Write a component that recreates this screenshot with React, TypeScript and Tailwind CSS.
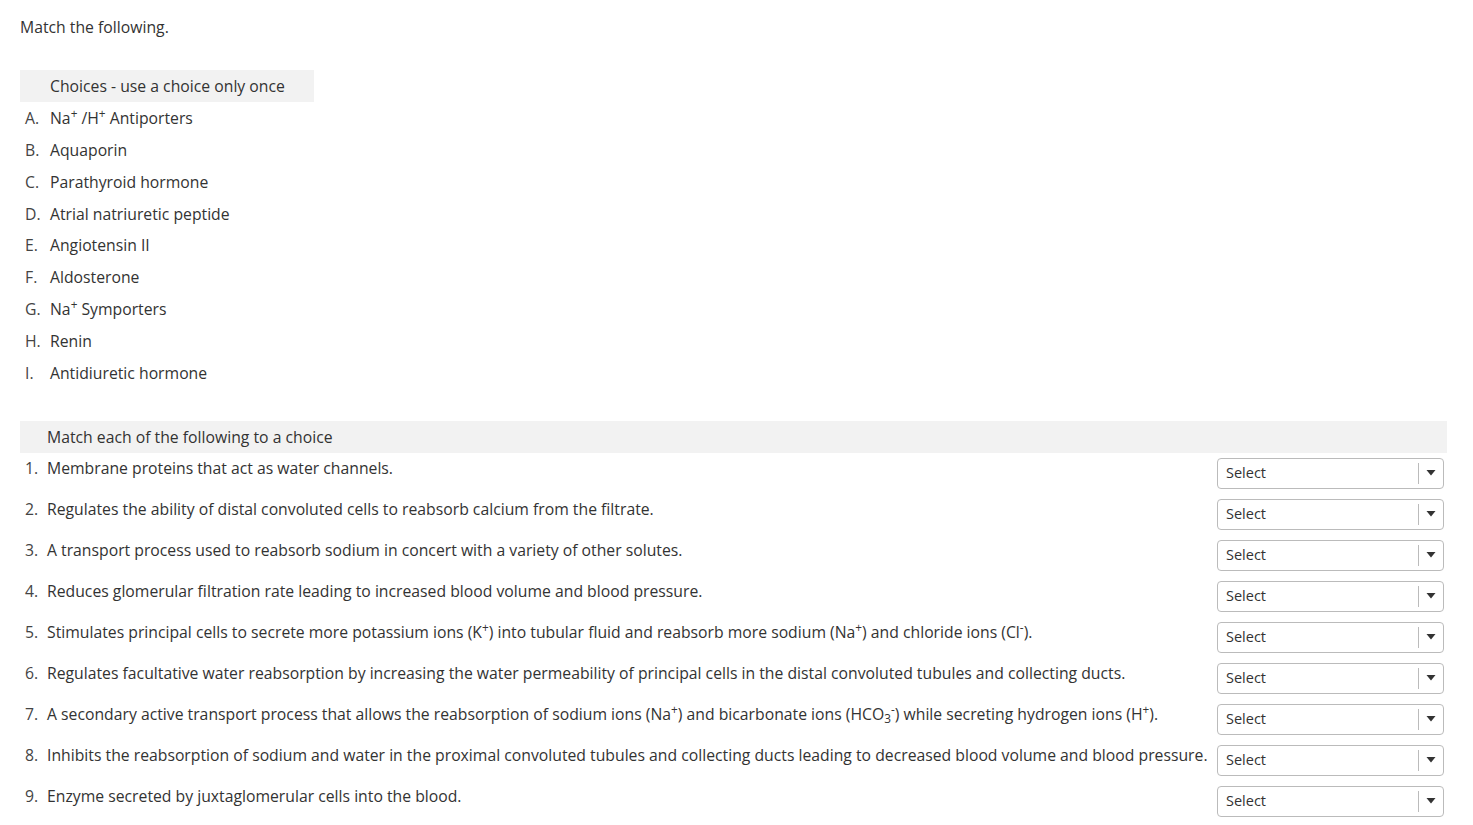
import React from "react";

const Sup = ({ c }: { c: string }) => <sup>{c}</sup>;

const choices: [string, React.ReactNode][] = [
  ["A.", <>Na<Sup c="+" /> /H<Sup c="+" /> Antiporters</>],
  ["B.", "Aquaporin"],
  ["C.", "Parathyroid hormone"],
  ["D.", "Atrial natriuretic peptide"],
  ["E.", "Angiotensin II"],
  ["F.", "Aldosterone"],
  ["G.", <>Na<Sup c="+" /> Symporters</>],
  ["H.", "Renin"],
  ["I.", "Antidiuretic hormone"],
];

const items: React.ReactNode[] = [
  "Membrane proteins that act as water channels.",
  "Regulates the ability of distal convoluted cells to reabsorb calcium from the filtrate.",
  "A transport process used to reabsorb sodium in concert with a variety of other solutes.",
  "Reduces glomerular filtration rate leading to increased blood volume and blood pressure.",
  <>
    Stimulates principal cells to secrete more potassium ions (K<Sup c="+" />) into tubular fluid and reabsorb more sodium (Na<Sup c="+" />) and chloride ions (Cl<Sup c="-" />).
  </>,
  "Regulates facultative water reabsorption by increasing the water permeability of principal cells in the distal convoluted tubules and collecting ducts.",
  <>
    A secondary active transport process that allows the reabsorption of sodium ions (Na<Sup c="+" />) and bicarbonate ions (HCO<sub>3</sub><Sup c="-" />) while secreting hydrogen ions (H<Sup c="+" />).
  </>,
  "Inhibits the reabsorption of sodium and water in the proximal convoluted tubules and collecting ducts leading to decreased blood volume and blood pressure.",
  "Enzyme secreted by juxtaglomerular cells into the blood.",
];

function SelectBox() {
  return (
    <div className="mt-[1px] h-[31px] w-[227px] shrink-0 rounded-[4px] border border-[#bbbbbb] bg-white flex items-center">
      <span className="flex-1 pl-[8px] text-[14.5px] text-[#333333]">Select</span>
      <div className="h-[21px] w-px bg-[#bbbbbb]" />
      <div className="w-[24px] flex items-center justify-center">
        <svg width="10" height="6" viewBox="0 0 10 6">
          <path d="M0.5 0 L9.5 0 L5 5.5 Z" fill="#333333" />
        </svg>
      </div>
    </div>
  );
}

export default function App() {
  return (
    <div
      className="bg-white text-[#333333] text-[15.75px] leading-[22px] pl-[20px] pr-[26px] pt-[16px] min-h-[825px]"
      style={{ fontFamily: '"Open Sans", "Noto Sans", sans-serif' }}
    >
      <div>Match the following.</div>

      <div className="mt-[32px] w-[294px]">
        <div className="h-[32px] bg-[#f2f2f2] flex items-center pl-[30px]">
          Choices - use a choice only once
        </div>
        {choices.map(([l, t]) => (
          <div key={l} className="h-[31.875px] flex items-center">
            <span className="w-[30px] pl-[5px] text-[#444444]">{l}</span>
            <span>{t}</span>
          </div>
        ))}
      </div>

      <div className="mt-[32px]">
        <div className="h-[32px] bg-[#f2f2f2] flex items-center pl-[27px]">
          Match each of the following to a choice
        </div>
        {items.map((t, i) => (
          <div key={i} className="h-[41px] flex items-start pt-[4px] pr-[3px]">
            <span className="w-[27px] pl-[5px] shrink-0 text-[#444444]">{i + 1}.</span>
            <span className="flex-1 min-w-0 whitespace-nowrap">{t}</span>
            <SelectBox />
          </div>
        ))}
      </div>
    </div>
  );
}
